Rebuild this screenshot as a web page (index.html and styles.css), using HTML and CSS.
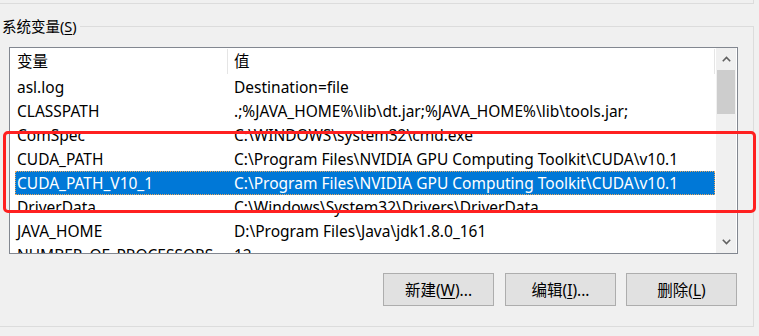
FILE: index.html
```html
<!DOCTYPE html>
<html lang="zh-CN">
<head>
<meta charset="utf-8">
<title>系统变量</title>
<link rel="stylesheet" href="styles.css">
</head>
<body>
<div class="prev"></div>
<fieldset class="sys">
  <legend class="legend">系统变量(<u>S</u>)</legend>
  <div class="list">
    <div class="table">
      <div class="head">
        <div class="hcell c1">变量</div>
        <div class="hcell c2">值</div>
      </div>
      <div class="row"><div class="c1">asl.log</div><div class="c2">Destination=file</div></div>
      <div class="row"><div class="c1">CLASSPATH</div><div class="c2">.;%JAVA_HOME%\lib\dt.jar;%JAVA_HOME%\lib\tools.jar;</div></div>
      <div class="row"><div class="c1">ComSpec</div><div class="c2">C:\WINDOWS\system32\cmd.exe</div></div>
      <div class="row"><div class="c1">CUDA_PATH</div><div class="c2">C:\Program Files\NVIDIA GPU Computing Toolkit\CUDA\v10.1</div></div>
      <div class="row selected"><div class="c1">CUDA_PATH_V10_1</div><div class="c2">C:\Program Files\NVIDIA GPU Computing Toolkit\CUDA\v10.1</div></div>
      <div class="row"><div class="c1">DriverData</div><div class="c2">C:\Windows\System32\Drivers\DriverData</div></div>
      <div class="row"><div class="c1">JAVA_HOME</div><div class="c2">D:\Program Files\Java\jdk1.8.0_161</div></div>
      <div class="row"><div class="c1">NUMBER_OF_PROCESSORS</div><div class="c2">12</div></div>
    </div>
    <div class="scroll">
      <div class="sbtn up"><svg width="9" height="6" viewBox="0 0 9 6"><polyline points="0.8,5.2 4.5,1.5 8.2,5.2" fill="none" stroke="#606060" stroke-width="1.6"/></svg></div>
      <div class="thumb"></div>
      <div class="track"></div>
      <div class="sbtn down"><svg width="9" height="6" viewBox="0 0 9 6"><polyline points="0.8,0.8 4.5,4.5 8.2,0.8" fill="none" stroke="#606060" stroke-width="1.6"/></svg></div>
    </div>
  </div>
  <div class="buttons">
    <button class="btn first">新建(<u>W</u>)...</button>
    <button class="btn">编辑(<u>I</u>)...</button>
    <button class="btn">删除(<u>L</u>)</button>
  </div>
</fieldset>
<div class="mark"></div>
</body>
</html>
```
FILE: styles.css
```css
html, body {
  margin: 0;
  padding: 0;
}
body {
  width: 759px;
  height: 336px;
  overflow: hidden;
  background: #f0f0f0;
  color: #000;
  font-family: "Noto Sans", "Noto Sans CJK SC", sans-serif;
  font-size: 15.5px;
  position: relative;
}
.prev {
  width: 753px;
  height: 3px;
  border-right: 1px solid #dcdcdc;
  border-bottom: 1px solid #dcdcdc;
}
.sys {
  margin: 12px 0 0 0;
  padding: 0 0 20px 0;
  width: 754px;
  box-sizing: border-box;
  border: 1px solid #dcdcdc;
  border-left: none;
  min-width: 0;
}
.legend {
  padding: 0 3px 0 2px;
  margin: 0;
  font-size: 14.5px;
  line-height: 20px;
}
.legend u, .btn u {
  text-underline-offset: 2px;
}
.list {
  margin: 11px 0 0 9px;
  width: 729px;
  height: 207px;
  box-sizing: border-box;
  border: 1px solid #828790;
  background: #fff;
  display: flex;
}
.table {
  flex: 1;
  padding: 0 1px 0 5px;
  overflow: hidden;
}
.head {
  display: flex;
  height: 27px;
}
.hcell {
  height: 25px;
  margin-top: 1px;
  line-height: 25px;
  border-right: 1px solid #e5e5e5;
  box-sizing: border-box;
}
.head .c1 {
  width: 213px;
  padding-left: 2px;
}
.head .c2 {
  flex: 1;
  padding-left: 6px;
}
.row {
  display: grid;
  grid-template-columns: 213px 1fr;
  height: 24px;
  line-height: 24px;
  white-space: nowrap;
}
.row .c1 {
  padding-left: 2px;
  overflow: hidden;
}
.row .c2 {
  padding-left: 6px;
  overflow: hidden;
}
.row.selected {
  background: #0078d7;
  color: #fff;
  outline: 1px dotted #e8a860;
  outline-offset: -1px;
}
.scroll {
  width: 20px;
  margin-right: 1px;
  background: #f0f0f0;
  display: flex;
  flex-direction: column;
}
.sbtn {
  height: 22px;
  display: flex;
  align-items: center;
  justify-content: center;
}
.thumb {
  height: 44px;
  margin: 0 1px 0 1px;
  background: #cdcdcd;
}
.track {
  flex: 1;
}
.buttons {
  display: flex;
  justify-content: flex-end;
  gap: 10px;
  margin-top: 19px;
  padding-right: 16px;
}
.btn {
  width: 111px;
  height: 33px;
  border: 1px solid #adadad;
  background: #e1e1e1;
  font-family: "Noto Sans", "Noto Sans CJK SC", sans-serif;
  font-size: 15.5px;
  color: #000;
  padding: 0;
}
.btn.first {
  margin-right: 1px;
}
.mark {
  position: absolute;
  left: 3px;
  top: 131px;
  width: 753px;
  height: 82px;
  box-sizing: border-box;
  border: 3px solid #ff2020;
  border-radius: 5px;
}
```
